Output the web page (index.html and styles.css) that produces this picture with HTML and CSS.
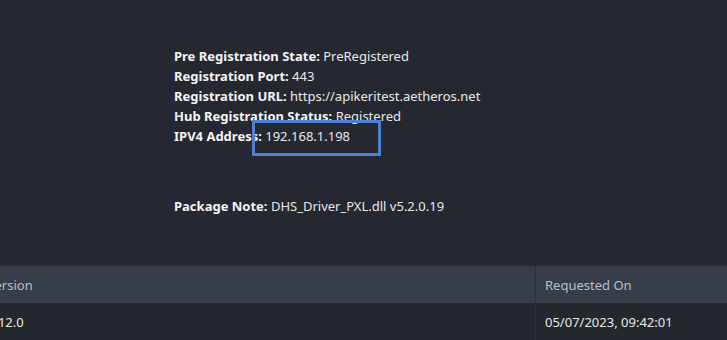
FILE: index.html
```html
<!DOCTYPE html>
<html lang="en">
<head>
    <meta charset="UTF-8">
    <meta name="viewport" content="width=device-width, initial-scale=1.0">
    <title>Device Details</title>
    <link rel="stylesheet" href="styles.css">
</head>
<body>
    <div class="details">
        <div class="info">
            <p><strong>Pre Registration State:</strong> PreRegistered</p>
            <p><strong>Registration Port:</strong> 443</p>
            <p><strong>Registration URL:</strong> https://apikeritest.aetheros.net</p>
            <p><strong>Hub Registration Status:</strong> Registered</p>
            <p class="ip-line"><strong>IPV4 Address:</strong> 192.168.1.198<span class="highlight"></span></p>
        </div>
        <div class="note">
            <p><strong>Package Note:</strong> DHS_Driver_PXL.dll v5.2.0.19</p>
        </div>
    </div>

    <div class="table-wrap">
        <table class="history">
            <thead>
                <tr>
                    <th class="col-version">Version</th>
                    <th class="col-date">Requested On</th>
                </tr>
            </thead>
            <tbody>
                <tr>
                    <td class="col-version">5.12.0</td>
                    <td class="col-date">05/07/2023, 09:42:01</td>
                </tr>
            </tbody>
        </table>
    </div>
</body>
</html>
```

FILE: styles.css
```css
body {
    margin: 0;
    background-color: #252830;
    color: #e8e8e8;
    font-family: 'Noto Sans', 'Open Sans', sans-serif;
    font-size: 13px;
    overflow: hidden;
}
.details {
    padding: 46px 0 0 174px;
    height: 220px;
    box-sizing: border-box;
}
.info p,
.note p {
    margin: 0;
    line-height: 20px;
}
strong {
    color: #f4f4f4;
    font-weight: bold;
}
.ip-line {
    position: relative;
}
.highlight {
    position: absolute;
    left: 78px;
    top: -6px;
    width: 123px;
    height: 30px;
    border: 3px solid #4f7fd0;
}
.note {
    margin-top: 50px;
}
.table-wrap {
    margin-top: 46px;
    overflow: hidden;
}
.history {
    border-collapse: collapse;
    margin-left: -22px;
    width: 770px;
}
.history th,
.history td {
    text-align: left;
    padding: 0 9px;
    font-weight: normal;
}
.history th {
    background-color: #383d4a;
    color: #b9bec9;
    height: 37px;
}
.history td {
    background-color: #23272e;
    color: #e8e8e8;
    height: 37px;
}
.col-version {
    width: 539px;
}
.col-date {
    border-left: 1px solid #2c3039;
}
```
